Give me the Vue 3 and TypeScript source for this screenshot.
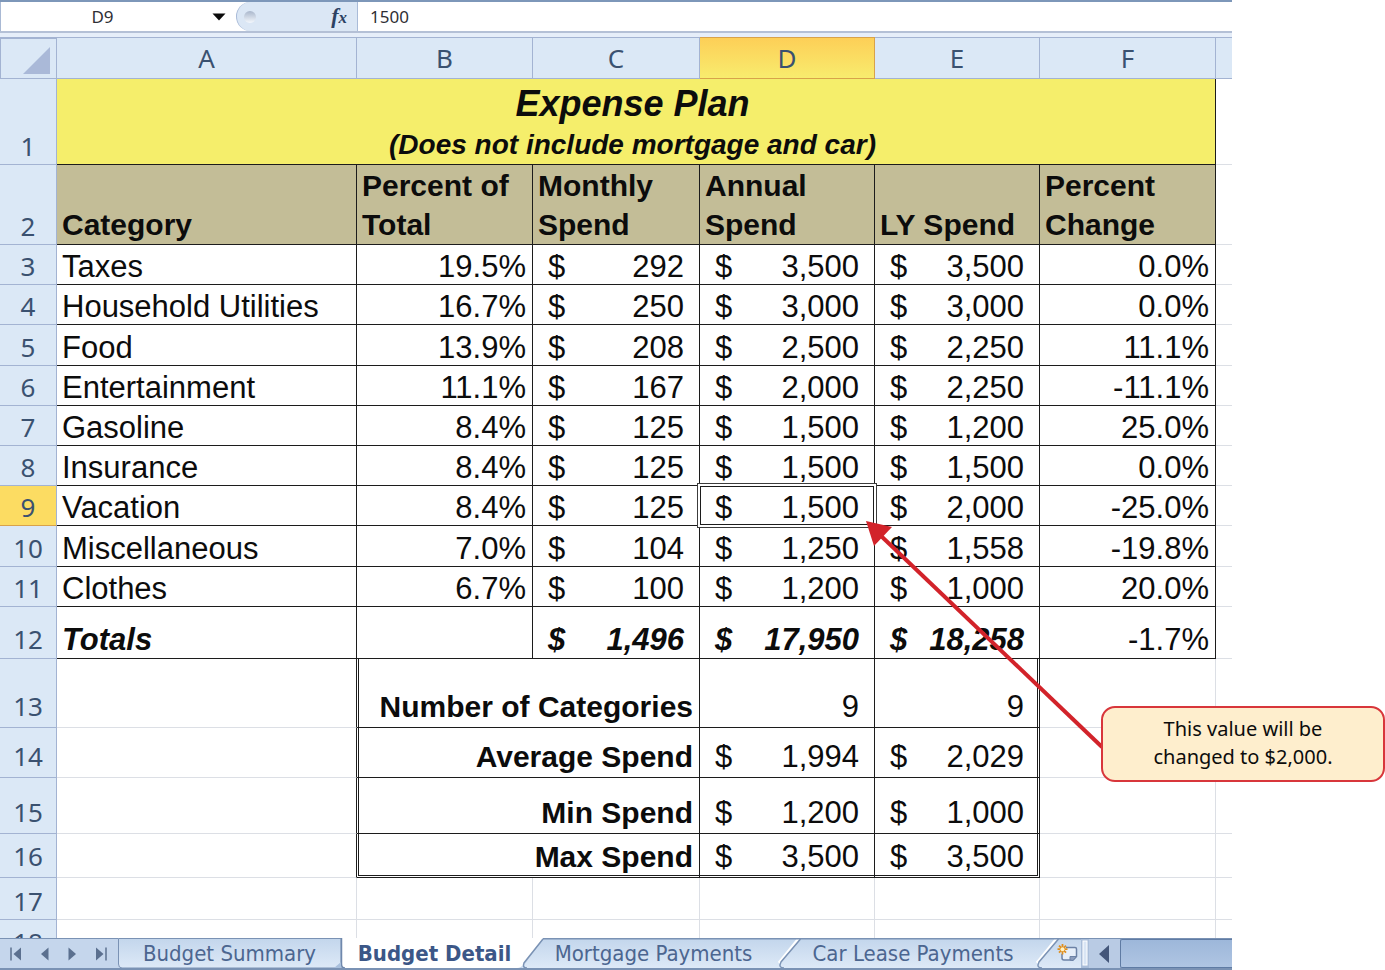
<script setup lang="ts">
import { ref } from 'vue'

interface Expense {
  row: number
  height: number
  name: string
  share: string
  monthly: string
  annual: string
  lastYear: string
  change: string
}

interface Summary {
  row: number
  height: number
  label: string
  money: boolean
  annual: string
  lastYear: string
}

const columns = ['A', 'B', 'C', 'D', 'E', 'F']

const expenses: Expense[] = [
  { row: 3, height: 40, name: 'Taxes', share: '19.5%', monthly: '292', annual: '3,500', lastYear: '3,500', change: '0.0%' },
  { row: 4, height: 40, name: 'Household Utilities', share: '16.7%', monthly: '250', annual: '3,000', lastYear: '3,000', change: '0.0%' },
  { row: 5, height: 41, name: 'Food', share: '13.9%', monthly: '208', annual: '2,500', lastYear: '2,250', change: '11.1%' },
  { row: 6, height: 40, name: 'Entertainment', share: '11.1%', monthly: '167', annual: '2,000', lastYear: '2,250', change: '-11.1%' },
  { row: 7, height: 40, name: 'Gasoline', share: '8.4%', monthly: '125', annual: '1,500', lastYear: '1,200', change: '25.0%' },
  { row: 8, height: 40, name: 'Insurance', share: '8.4%', monthly: '125', annual: '1,500', lastYear: '1,500', change: '0.0%' },
  { row: 9, height: 40, name: 'Vacation', share: '8.4%', monthly: '125', annual: '1,500', lastYear: '2,000', change: '-25.0%' },
  { row: 10, height: 41, name: 'Miscellaneous', share: '7.0%', monthly: '104', annual: '1,250', lastYear: '1,558', change: '-19.8%' },
  { row: 11, height: 40, name: 'Clothes', share: '6.7%', monthly: '100', annual: '1,200', lastYear: '1,000', change: '20.0%' },
]

const summaries: Summary[] = [
  { row: 13, height: 69, label: 'Number of Categories', money: false, annual: '9', lastYear: '9' },
  { row: 14, height: 50, label: 'Average Spend', money: true, annual: '1,994', lastYear: '2,029' },
  { row: 15, height: 56, label: 'Min Spend', money: true, annual: '1,200', lastYear: '1,000' },
  { row: 16, height: 44, label: 'Max Spend', money: true, annual: '3,500', lastYear: '3,500' },
]

const emptyRows = [
  { row: 17, height: 42 },
  { row: 18, height: 41 },
]

const cellName = ref('D9')
const formula = ref('1500')
</script>

<template>
  <div class="page">
    <main class="workbook">
      <div class="formula-bar">
        <div class="name-box">
          <input v-model="cellName" class="name-input" type="text" aria-label="Name box" />
          <button class="name-drop" type="button" aria-label="Show names">
            <svg width="14" height="8" viewBox="0 0 14 8"><path d="M0.5 0.5H13.5L7 7.5Z" fill="#0b0b0b" /></svg>
          </button>
        </div>
        <div class="fx-zone">
          <span class="knob"></span>
          <button class="fx" type="button" aria-label="Insert function">f<span class="fx-small">x</span></button>
        </div>
        <input v-model="formula" class="formula-input" type="text" aria-label="Formula" />
      </div>

      <div class="grid">
        <table class="sheet">
          <colgroup>
            <col class="col-row" />
            <col class="col-a" />
            <col class="col-b" />
            <col class="col-c" />
            <col class="col-d" />
            <col class="col-e" />
            <col class="col-f" />
            <col />
          </colgroup>
          <thead>
            <tr class="letters">
              <th class="corner">
                <svg width="27" height="27" viewBox="0 0 27 27"><path d="M27 0V27H0Z" fill="#aab9d8" /></svg>
              </th>
              <th v-for="c in columns" :key="c" scope="col" :class="{ active: c === 'D' }">{{ c }}</th>
              <th class="edge"></th>
            </tr>
          </thead>
          <tbody>
            <tr class="title-row">
              <th class="num" scope="row">1</th>
              <td class="boxed title" colspan="6">
                <div class="title-main">Expense Plan</div>
                <div class="title-sub">(Does not include mortgage and car)</div>
              </td>
              <td class="edge"></td>
            </tr>
            <tr class="head-row">
              <th class="num" scope="row">2</th>
              <td class="boxed head">Category</td>
              <td class="boxed head">Percent of<br />Total</td>
              <td class="boxed head">Monthly<br />Spend</td>
              <td class="boxed head">Annual<br />Spend</td>
              <td class="boxed head">LY Spend</td>
              <td class="boxed head">Percent<br />Change</td>
              <td class="edge"></td>
            </tr>
            <tr v-for="e in expenses" :key="e.row" :style="{ height: e.height + 'px' }">
              <th class="num" scope="row" :class="{ active: e.row === 9 }">{{ e.row }}</th>
              <td class="boxed">{{ e.name }}</td>
              <td class="boxed right">{{ e.share }}</td>
              <td class="boxed"><div class="money"><span>$</span><span>{{ e.monthly }}</span></div></td>
              <td class="boxed" :class="{ selected: e.row === 9 }">
                <div class="money"><span>$</span><span>{{ e.annual }}</span></div>
              </td>
              <td class="boxed"><div class="money"><span>$</span><span>{{ e.lastYear }}</span></div></td>
              <td class="boxed right">{{ e.change }}</td>
              <td class="edge"></td>
            </tr>
            <tr class="total-row">
              <th class="num" scope="row">12</th>
              <td class="boxed strong">Totals</td>
              <td class="boxed"></td>
              <td class="boxed strong"><div class="money"><span>$</span><span>1,496</span></div></td>
              <td class="boxed strong"><div class="money"><span>$</span><span>17,950</span></div></td>
              <td class="boxed strong"><div class="money"><span>$</span><span>18,258</span></div></td>
              <td class="boxed right">-1.7%</td>
              <td class="edge"></td>
            </tr>
            <tr
              v-for="s in summaries"
              :key="s.row"
              class="summary-row"
              :class="{ last: s.row === 16 }"
              :style="{ height: s.height + 'px' }"
            >
              <th class="num" scope="row">{{ s.row }}</th>
              <td class="beside"></td>
              <td class="boxed right label" colspan="2">{{ s.label }}</td>
              <td class="boxed mid">
                <div class="money"><span>{{ s.money ? '$' : '' }}</span><span>{{ s.annual }}</span></div>
              </td>
              <td class="boxed end">
                <div class="money"><span>{{ s.money ? '$' : '' }}</span><span>{{ s.lastYear }}</span></div>
              </td>
              <td></td>
              <td class="edge"></td>
            </tr>
            <tr v-for="r in emptyRows" :key="r.row" :style="{ height: r.height + 'px' }">
              <th class="num" scope="row">{{ r.row }}</th>
              <td v-for="c in columns" :key="c"></td>
              <td class="edge"></td>
            </tr>
          </tbody>
        </table>
      </div>

      <footer class="tab-bar">
        <div class="nav">
          <button type="button" aria-label="First sheet">
            <svg width="12" height="14" viewBox="0 0 12 14"><path d="M1 0.5V13.5" stroke="#5b708f" stroke-width="1.5" /><path d="M11 0.5V13.5L3.5 7Z" fill="#5b708f" /></svg>
          </button>
          <button type="button" aria-label="Previous sheet">
            <svg width="12" height="14" viewBox="0 0 12 14"><path d="M10.5 0.5V13.5L3 7Z" fill="#5b708f" /></svg>
          </button>
          <button type="button" aria-label="Next sheet">
            <svg width="12" height="14" viewBox="0 0 12 14"><path d="M1.5 0.5V13.5L9 7Z" fill="#5b708f" /></svg>
          </button>
          <button type="button" aria-label="Last sheet">
            <svg width="12" height="14" viewBox="0 0 12 14"><path d="M11 0.5V13.5" stroke="#5b708f" stroke-width="1.5" /><path d="M1 0.5V13.5L8.5 7Z" fill="#5b708f" /></svg>
          </button>
        </div>
        <div class="tabs">
          <svg class="tab-shapes" width="971" height="32" viewBox="0 0 971 32">
            <defs>
              <linearGradient id="tabFill" x1="0" y1="0" x2="0" y2="1">
                <stop offset="0" stop-color="#c3d6ec" />
                <stop offset="1" stop-color="#dde9f7" />
              </linearGradient>
            </defs>
            <path d="M0.5 0.5H223V30H4Q0.5 30 0.5 26Z" fill="url(#tabFill)" stroke="#7a92b4" />
            <path d="M932 0.5H963V30H906Z" fill="url(#tabFill)" />
            <path d="M425 1H937.5L918 25Q914 30 908 30H404Z" fill="url(#tabFill)" />
            <path d="M223 0V26Q223 30 227 30H399Q403 30 406 26L425 0Z" fill="#fff" />
            <path d="M223.5 0V26Q223.5 30 227 30" fill="none" stroke="#6f88ac" stroke-width="1.5" />
            <path d="M216 30L223 24V30Z" fill="#a9c0dd" />
            <path d="M425 1L406 25Q404 30 409 30" fill="none" stroke="#7a92b4" stroke-width="1.5" />
            <path d="M680.5 1L661 25" stroke="#fff" stroke-width="3" />
            <path d="M682.5 1L663 24Q660 30 666 30" fill="none" stroke="#7a92b4" stroke-width="1.5" />
            <path d="M938.5 1L919 25" stroke="#fff" stroke-width="3" />
            <path d="M940.5 1L921 24Q918 30 924 30" fill="none" stroke="#7a92b4" stroke-width="1.5" />
            <path d="M425 0.75H971" stroke="#7a92b4" stroke-width="1.5" />
            <path d="M0 31H971" stroke="#7a92b4" stroke-width="2" />
            <rect x="963" y="1" width="8" height="29" fill="#a9bdd9" />
            <rect x="965" y="3" width="4" height="24" fill="#d9e5f4" stroke="#fff" />
          </svg>
          <button class="tab tab-summary" type="button">Budget Summary</button>
          <button class="tab tab-detail" type="button">Budget Detail</button>
          <button class="tab tab-mortgage" type="button">Mortgage Payments</button>
          <button class="tab tab-car" type="button">Car Lease Payments</button>
          <button class="new-sheet" type="button" aria-label="Insert worksheet">
            <svg width="21" height="18" viewBox="0 0 21 18">
              <path d="M9 3.5H18Q19.5 3.5 19.5 5V12.5L16 16H7Q5 16 5 14V10" fill="#e6effa" stroke="#6c82a6" stroke-width="1.5" />
              <path d="M13 16V12.5H19.5L16 16.5Z" fill="#8b9dbd" stroke="#6c82a6" />
              <path d="M5.5 0V10.5M0.5 5.2H10.5M2 1.7L9 8.7M9 1.7L2 8.7" stroke="#e08f1e" stroke-width="1.8" />
              <circle cx="5.5" cy="5.2" r="2" fill="#fff3c4" />
            </svg>
          </button>
        </div>
        <div class="scroller">
          <button class="scroll-left" type="button" aria-label="Scroll left">
            <svg width="10" height="18" viewBox="0 0 10 18"><path d="M10 0V18L0 9Z" fill="#44577a" /></svg>
          </button>
          <div class="thumb"></div>
        </div>
      </footer>
    </main>

    <svg class="arrow" width="240" height="230" viewBox="0 0 240 230">
      <path d="M14 14L237 227" stroke="#d2232a" stroke-width="4" />
      <path d="M1 1L27 7L9 26Z" fill="#d2232a" />
    </svg>
    <aside class="callout">This value will be<br />changed to $2,000.</aside>
  </div>
</template>

<style>
body {
  margin: 0;
  background: #fff;
}
</style>

<style scoped>
* {
  box-sizing: border-box;
}

.page {
  position: relative;
  display: flex;
  height: 100vh;
  overflow: hidden;
  font-family: 'Liberation Sans', Arial, sans-serif;
  color: #0c0c0c;
}

button,
input {
  margin: 0;
  padding: 0;
  border: 0;
  background: none;
  color: inherit;
  font: inherit;
}

svg {
  display: block;
}

.workbook {
  display: flex;
  flex: 1;
  flex-direction: column;
  min-width: 0;
  margin-right: 153px;
}

/* Formula bar */
.formula-bar {
  display: flex;
  flex: none;
  height: 37px;
  border-top: 2px solid #7d97b9;
  border-bottom: 4px solid #e6eef9;
  box-shadow: inset 0 -2px #b4c0d6;
  font-family: 'Noto Sans', sans-serif;
  font-size: 17px;
  color: #2f2f35;
}

.name-box {
  display: flex;
  align-items: center;
  width: 236px;
  margin-bottom: 2px;
  border-left: 1px solid #a9b9d4;
}

.name-input {
  flex: 1;
  min-width: 0;
  text-align: center;
}

.name-drop {
  padding: 0 10px 0 8px;
}

.fx-zone {
  display: flex;
  align-items: center;
  justify-content: space-between;
  width: 122px;
  margin-bottom: 2px;
  padding: 0 10px 0 7px;
  border: 1px solid #a9bbd8;
  border-width: 0 1px;
  border-radius: 15px 0 0 15px;
  background: #dbe7f5;
}

.knob {
  width: 12px;
  height: 12px;
  border-radius: 50%;
  background: linear-gradient(#a9b6cb, #f4f8fd);
}

.fx {
  font-family: 'Liberation Serif', serif;
  font-size: 22px;
  font-style: italic;
  font-weight: bold;
  line-height: 26px;
  color: #2d4263;
}

.fx-small {
  font-size: 17px;
}

.formula-input {
  flex: 1;
  min-width: 0;
  margin-bottom: 2px;
  padding-left: 12px;
}

/* Grid */
.grid {
  flex: 1;
  min-height: 0;
  overflow: hidden;
}

.sheet {
  width: 100%;
  table-layout: fixed;
  border-collapse: separate;
  border-spacing: 0;
  font-size: 31px;
  line-height: 34px;
}

.col-row { width: 57px; }
.col-a { width: 300px; }
.col-b { width: 176px; }
.col-c { width: 167px; }
.col-d { width: 175px; }
.col-e { width: 165px; }
.col-f { width: 176px; }

.letters { height: 42px; }
.title-row { height: 86px; }
.head-row { height: 80px; }
.total-row { height: 52px; }

th {
  padding: 0;
  border: 0 solid #a3b3d2;
  border-right-width: 1px;
  border-bottom-width: 1px;
  background: #dbe8f6;
  font-family: 'Noto Sans', sans-serif;
  font-size: 26px;
  font-weight: normal;
  line-height: 36px;
  color: #3a5170;
}

.letters th {
  border-top-width: 1px;
}

.letters .corner {
  border-width: 2px 1px 1px;
  padding: 4px 6px 0 0;
}

.corner svg {
  margin-left: auto;
}

.letters .active {
  border-color: #d8a24a;
  background: linear-gradient(#fdcf57, #f8ec6e);
}

.num {
  vertical-align: bottom;
}

.num.active {
  border-bottom-color: #d8a24a;
  background: #fcdc62;
}

td {
  padding: 0 6px 0 5px;
  border: 0 solid #dcdfe5;
  border-right-width: 1px;
  border-bottom-width: 1px;
  vertical-align: bottom;
  white-space: nowrap;
}

.edge {
  border-right-width: 0;
}

.boxed {
  border-color: #1c1c1c;
}

.right {
  text-align: right;
}

.title {
  padding-right: 12px;
  background: #f5ee6b;
  text-align: center;
  font-style: italic;
  font-weight: bold;
}

.title-main {
  font-size: 36px;
  line-height: 44px;
}

.title-sub {
  font-size: 28px;
  line-height: 38px;
}

.head {
  background: #c3bd97;
  font-size: 30px;
  font-weight: bold;
  line-height: 39px;
}

.strong {
  font-size: 31px;
  font-style: italic;
  font-weight: bold;
}

.money {
  display: flex;
  justify-content: space-between;
  padding: 0 9px 0 10px;
}

.total-row > * {
  padding-bottom: 1px;
}

.summary-row > * {
  padding-bottom: 3px;
}

.summary-row .label {
  font-size: 30px;
  font-weight: bold;
  box-shadow: inset 1px 0 #fff, inset 2px 0 #1c1c1c;
}

.summary-row .beside {
  border-right-color: #1c1c1c;
}

.summary-row .end {
  box-shadow: inset -1px 0 #fff, inset -2px 0 #1c1c1c;
}

.last .label {
  box-shadow: inset 1px -1px #fff, inset 2px -2px #1c1c1c;
}

.last .mid {
  box-shadow: inset 0 -1px #fff, inset 0 -2px #1c1c1c;
}

.last .end {
  box-shadow: inset -1px -1px #fff, inset -2px -2px #1c1c1c;
}

.selected {
  position: relative;
}

.selected::after {
  content: '';
  position: absolute;
  inset: 0;
  border: 1px solid #1c1c1c;
  box-shadow: 0 0 0 2px #fff, 0 0 0 3px #3c3c3c;
}

/* Sheet tabs */
.tab-bar {
  display: flex;
  flex: none;
  height: 32px;
  background: #c5d6ec;
  font-family: 'DejaVu Sans Condensed', 'DejaVu Sans', sans-serif;
  font-size: 22px;
  color: #4c6690;
}

.nav {
  display: flex;
  align-items: center;
  justify-content: space-between;
  width: 118px;
  padding: 0 11px 0 10px;
  border-top: 1px solid #7a92b4;
  border-bottom: 2px solid #7a92b4;
}

.tabs {
  position: relative;
  display: flex;
  flex: none;
  width: 971px;
}

.tab-shapes {
  position: absolute;
  inset: 0;
}

.tab,
.new-sheet {
  position: relative;
  line-height: 32px;
  white-space: nowrap;
}

.tab-summary { width: 223px; }

.tab-detail {
  width: 187px;
  font-weight: bold;
  color: #3c5787;
}

.tab-mortgage { width: 251px; }
.tab-car { width: 268px; }

.new-sheet {
  padding: 0 0 2px 10px;
}

.scroller {
  display: flex;
  flex: 1;
  min-width: 0;
  border-top: 1px solid #7a92b4;
  border-bottom: 2px solid #7a92b4;
  background: #b9cbe4;
}

.scroll-left {
  width: 31px;
  padding-left: 10px;
}

.thumb {
  flex: 1;
  border: 1px solid #5f7ba3;
  border-right: 0;
  border-radius: 2px 0 0 2px;
  background: linear-gradient(#9db7da, #afc5e2);
}

/* Annotation */
.arrow {
  position: absolute;
  top: 520px;
  left: 865px;
}

.callout {
  position: absolute;
  top: 706px;
  left: 1101px;
  width: 284px;
  padding: 7px 0 9px;
  border: 2px solid #d8363b;
  border-radius: 14px;
  background: #feeecd;
  font-family: 'Noto Sans', sans-serif;
  font-size: 20px;
  line-height: 28px;
  text-align: center;
}
</style>
